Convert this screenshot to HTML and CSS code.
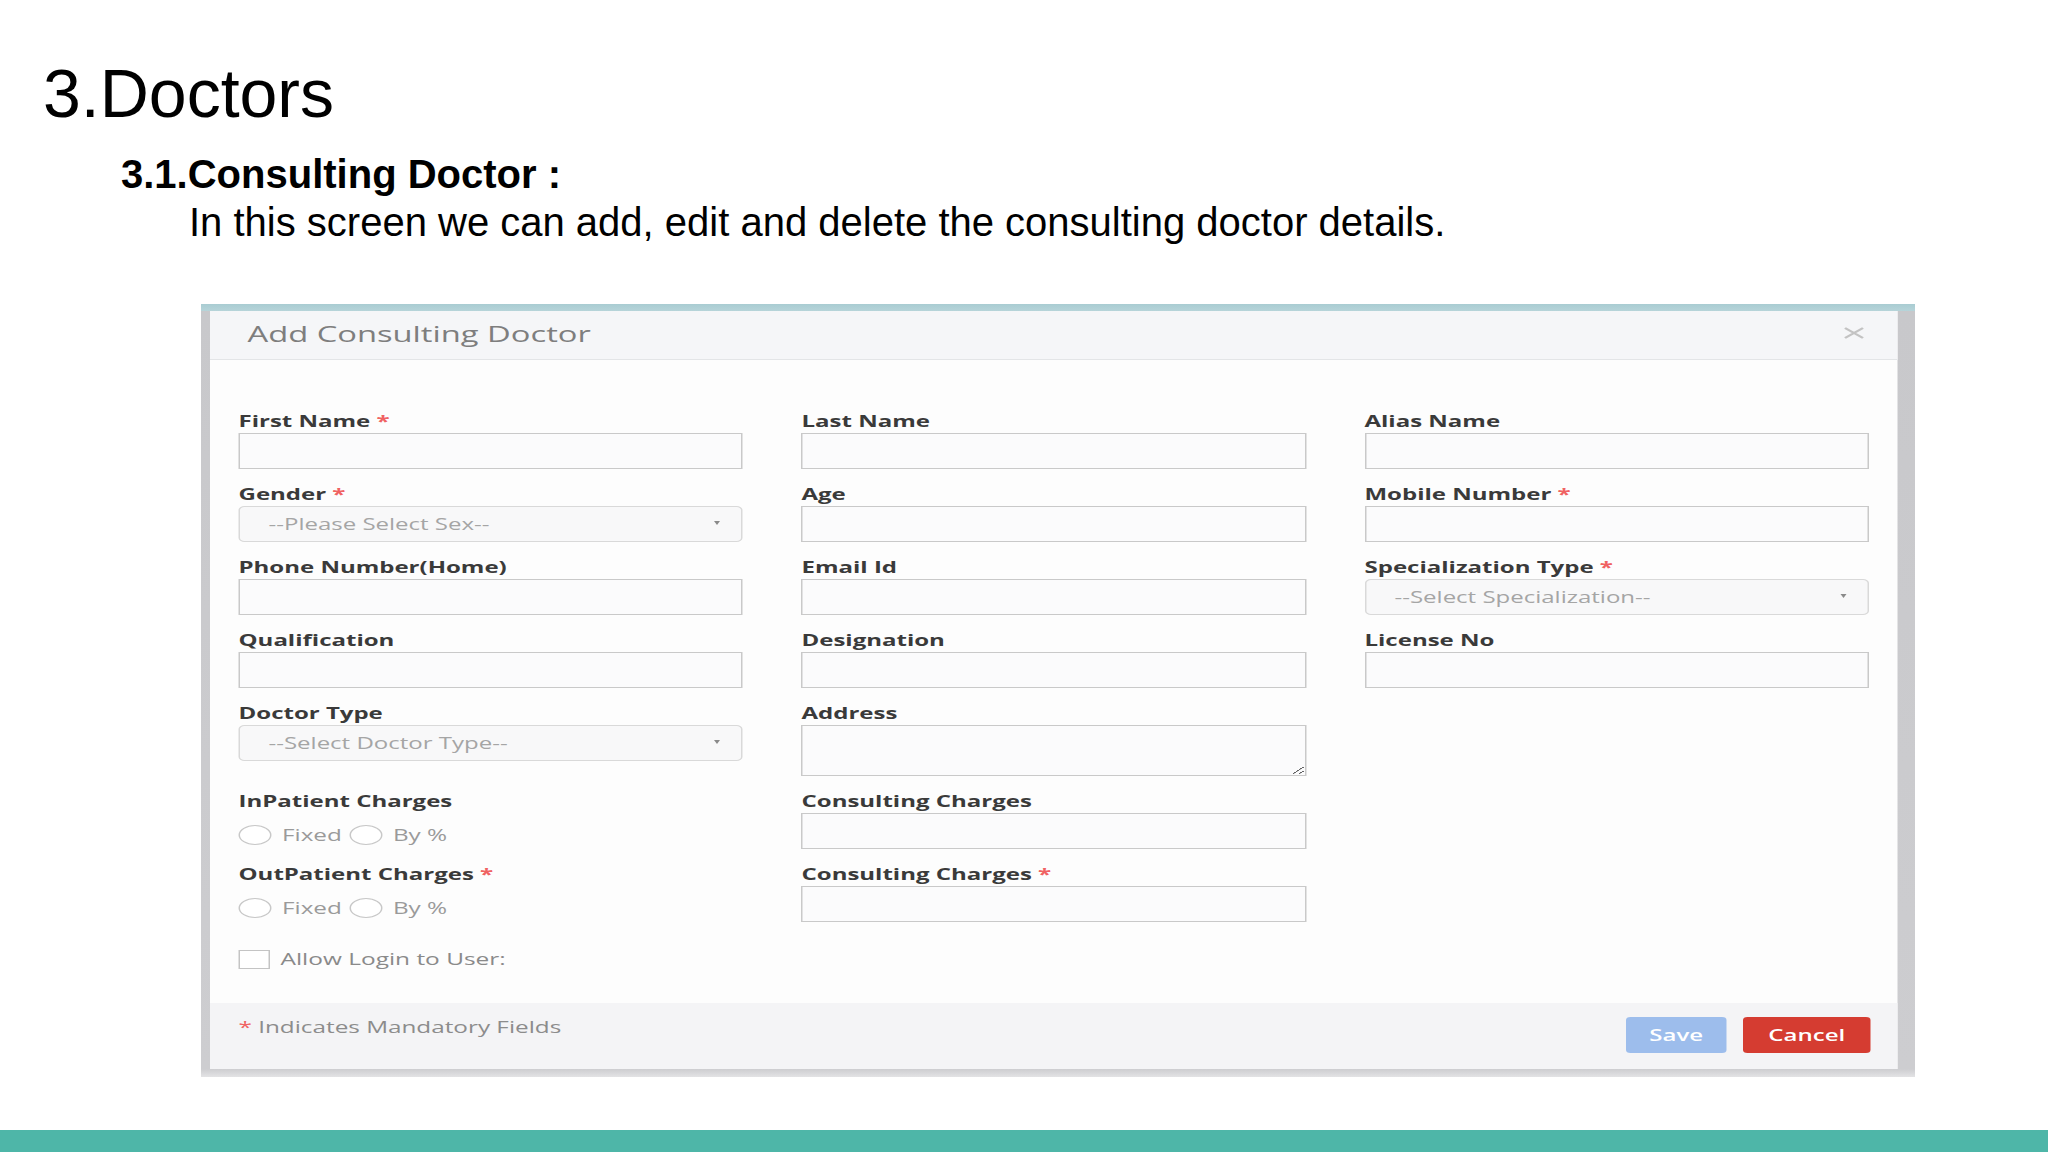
FILE: index.html
```html
<!DOCTYPE html>
<html lang="en">
<head>
<meta charset="utf-8">
<title>3.Doctors</title>
<link rel="stylesheet" href="styles.css">
</head>
<body>
<main class="page">
  <h1 class="title">3.Doctors</h1>
  <h2 class="subtitle">3.1.Consulting Doctor :</h2>
  <p class="desc">In this screen we can add, edit and delete the consulting doctor details.</p>

  <div class="shot">
    <div class="modal">
      <div class="modal-header">
        <span class="modal-title">Add Consulting Doctor</span>
        <span class="close" aria-label="close">
          <svg width="14" height="12" viewBox="0 0 14 12"><path d="M1 1 L13 11 M13 1 L1 11" stroke="#c3c3c3" stroke-width="1.8" fill="none"/></svg>
        </span>
      </div>

      <div class="modal-body">
        <div class="form-grid">
          <div class="field"><label class="field-label">First Name <span class="req">*</span></label><input class="input" type="text"></div>
          <div class="field"><label class="field-label">Last Name</label><input class="input" type="text"></div>
          <div class="field"><label class="field-label">Alias Name</label><input class="input" type="text"></div>

          <div class="field"><label class="field-label">Gender <span class="req">*</span></label><div class="select">--Please Select Sex--<span class="caret"></span></div></div>
          <div class="field"><label class="field-label">Age</label><input class="input" type="text"></div>
          <div class="field"><label class="field-label">Mobile Number <span class="req">*</span></label><input class="input" type="text"></div>

          <div class="field"><label class="field-label">Phone Number(Home)</label><input class="input" type="text"></div>
          <div class="field"><label class="field-label">Email Id</label><input class="input" type="text"></div>
          <div class="field"><label class="field-label">Specialization Type <span class="req">*</span></label><div class="select">--Select Specialization--<span class="caret"></span></div></div>

          <div class="field"><label class="field-label">Qualification</label><input class="input" type="text"></div>
          <div class="field"><label class="field-label">Designation</label><input class="input" type="text"></div>
          <div class="field"><label class="field-label">License No</label><input class="input" type="text"></div>

          <div class="field"><label class="field-label">Doctor Type</label><div class="select">--Select Doctor Type--<span class="caret"></span></div></div>
          <div class="field"><label class="field-label">Address</label><textarea class="input textarea"></textarea></div>
          <div class="field empty"></div>

          <div class="field"><label class="field-label">InPatient Charges</label>
            <div class="radios"><span class="radio"></span><span class="radio-text">Fixed</span><span class="radio"></span><span class="radio-text">By %</span></div>
          </div>
          <div class="field"><label class="field-label">Consulting Charges</label><input class="input" type="text"></div>
          <div class="field empty"></div>

          <div class="field"><label class="field-label">OutPatient Charges <span class="req">*</span></label>
            <div class="radios"><span class="radio"></span><span class="radio-text">Fixed</span><span class="radio"></span><span class="radio-text">By %</span></div>
          </div>
          <div class="field"><label class="field-label">Consulting Charges <span class="req">*</span></label><input class="input" type="text"></div>
          <div class="field empty"></div>
        </div>

        <div class="check-row"><span class="checkbox"></span><span class="check-text">Allow Login to User:</span></div>
      </div>

      <div class="modal-footer">
        <span class="note"><span class="req">*</span> Indicates Mandatory Fields</span>
        <div class="buttons">
          <button class="btn btn-save" type="button">Save</button>
          <button class="btn btn-cancel" type="button">Cancel</button>
        </div>
      </div>
    </div>
  </div>
</main>
<footer class="bar"></footer>
</body>
</html>
```

FILE: styles.css
```css
* { box-sizing: border-box; }

html, body {
  margin: 0;
  padding: 0;
  background: #ffffff;
}

body {
  width: 2048px;
  height: 1152px;
  overflow: hidden;
  font-family: "Liberation Sans", Arial, sans-serif;
  color: #000000;
}

.page { display: flow-root; }

.title {
  margin: 59px 0 0 43px;
  font-size: 68px;
  line-height: 68px;
  font-weight: 400;
}

.subtitle {
  margin: 27px 0 0 121px;
  font-size: 40px;
  line-height: 40px;
  font-weight: 700;
}

.desc {
  margin: 8px 0 0 189px;
  font-size: 40px;
  line-height: 40px;
}

/* screenshot frame */
.shot {
  width: 1714px;
  margin: 62px 0 0 201px;
  padding: 7px 17px 8px 9px;
  background: linear-gradient(to bottom, #a9ccd2 0, #b6d4d9 7px, #c8c8cb 7px, #cdcdd0 calc(100% - 8px), #e3e3e5 100%);
}

.modal {
  width: 1125px;
  transform: scaleX(1.5);
  transform-origin: 0 0;
  background: #fdfdfd;
  font-family: "Open Sans", "Noto Sans", sans-serif;
}

.modal-header {
  display: flex;
  justify-content: space-between;
  align-items: flex-start;
  padding: 10px 22px 12px 25px;
  background: #f5f6f8;
  border-bottom: 1px solid #e3e5e7;
}

.modal-title {
  font-size: 21.8px;
  line-height: 26px;
  color: #7e7e7e;
}

.close {
  display: block;
  width: 14px;
  height: 12px;
  margin-top: 6px;
}

.close svg { display: block; }

.modal-body {
  padding: 53px 19px 34px;
}

.form-grid {
  display: grid;
  grid-template-columns: repeat(3, 1fr);
  column-gap: 39px;
  align-items: start;
}

.field { margin-bottom: 17px; }

.field-label {
  display: block;
  margin-bottom: 3px;
  font-size: 16px;
  line-height: 17px;
  font-weight: 700;
  color: #3a3a3a;
}

.req { color: #f06262; }

.input {
  display: block;
  width: 100%;
  height: 36px;
  margin: 0;
  padding: 0 12px;
  border: 1px solid #c9c9c9;
  border-radius: 0;
  background: #fbfbfc;
  font-family: inherit;
  font-size: 16px;
  outline: none;
}

.textarea {
  height: 51px;
  resize: vertical;
}

.select {
  position: relative;
  height: 36px;
  padding-left: 19px;
  border: 1px solid #d9d9d9;
  border-radius: 4px;
  background: #f8f8f9;
  font-size: 16px;
  line-height: 34px;
  color: #a5a5a5;
  white-space: nowrap;
}

.caret {
  position: absolute;
  right: 14px;
  top: 14px;
  width: 0;
  height: 0;
  border-left: 2.5px solid transparent;
  border-right: 2.5px solid transparent;
  border-top: 4px solid #8a8a8a;
}

.radios {
  display: flex;
  align-items: center;
  padding-top: 12px;
  font-size: 16.2px;
  line-height: 20px;
  color: #9a9a9a;
}

.radio {
  display: block;
  width: 22px;
  height: 20px;
  margin-right: 7px;
  border: 1px solid #c8c8c8;
  border-radius: 50%;
  background: #ffffff;
}

.radio-text + .radio { margin-left: 5px; }

.check-row {
  display: flex;
  align-items: center;
  height: 19px;
  margin-top: 11px;
}

.checkbox {
  display: block;
  width: 21px;
  height: 19px;
  margin-right: 7px;
  border: 1px solid #c4c4c4;
  background: #ffffff;
}

.check-text {
  font-size: 16.3px;
  line-height: 19px;
  color: #8a8a8a;
}

.modal-footer {
  display: flex;
  justify-content: space-between;
  align-items: flex-start;
  height: 66px;
  padding: 14px 18px 16px 19px;
  background: #f4f4f6;
}

.note {
  font-size: 16.2px;
  line-height: 20px;
  color: #8c8c8c;
}

.buttons {
  display: flex;
  gap: 11px;
}

.btn {
  height: 36px;
  padding: 0;
  border: 0;
  border-radius: 3px;
  font-family: inherit;
  font-size: 16px;
  font-weight: 600;
  line-height: 36px;
  color: #ffffff;
  text-align: center;
}

.btn-save {
  width: 67px;
  background: #9dbdec;
}

.btn-cancel {
  width: 85px;
  background: #d53c31;
}

.bar {
  height: 22px;
  margin-top: 53px;
  background: #4eb6a8;
}
```
